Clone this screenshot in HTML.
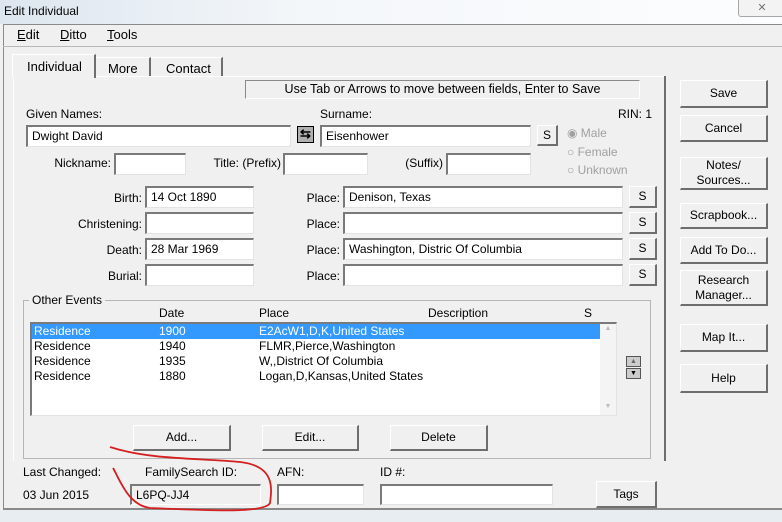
<!DOCTYPE html>
<html><head><style>
*{margin:0;padding:0;box-sizing:border-box}
body{width:782px;height:522px;overflow:hidden;background:#f0f0f0;font-family:"Liberation Sans",Arial,sans-serif;font-size:12px;color:#000;position:relative}
.a{position:absolute;white-space:nowrap}
.in{position:absolute;background:#fff;border-top:2px solid #7a7a7a;border-left:2px solid #7a7a7a;border-bottom:1px solid #e3e3e3;border-right:1px solid #e3e3e3;padding:2px 0 0 4px;height:22px;line-height:15px}
.bt{position:absolute;background:#f0f0f0;border-top:1px solid #fff;border-left:1px solid #fff;border-right:2px solid #6e6e6e;border-bottom:2px solid #6e6e6e;text-align:center;display:flex;align-items:center;justify-content:center;line-height:15px}
.r{text-align:right}
.g{color:#a0a0a0}
</style></head><body>
<div class="a" style="left:0;top:0;width:782px;height:24px;background:linear-gradient(90deg,#dde6ef,#f4f7fa 40%,#fcfdfe)"></div>
<div class="a" style="left:4px;top:4px;font-size:12px">Edit Individual</div>
<div class="a" style="left:738px;top:-4px;width:48px;height:21px;border:1px solid #a6a6a6;border-radius:3px;background:#f3f3f3;text-align:center;color:#777;font-size:11px;line-height:22px">✕</div>
<div class="a" style="left:3px;top:24px;width:779px;height:1px;background:#8a8a8a"></div>
<div class="a" style="left:3px;top:24px;width:1px;height:486px;background:#8a8a8a"></div>
<div class="a" style="left:3px;top:46px;width:779px;height:1px;background:#b8b8b8"></div>
<div class="a" style="left:17px;top:27px;font-size:13px"><u>E</u>dit</div>
<div class="a" style="left:60px;top:27px;font-size:13px"><u>D</u>itto</div>
<div class="a" style="left:107px;top:27px;font-size:13px"><u>T</u>ools</div>
<div class="a" style="left:13px;top:76px;width:653px;height:1px;background:#fff"></div>
<div class="a" style="left:13px;top:76px;width:1px;height:385px;background:#fff"></div>
<div class="a" style="left:664px;top:76px;width:2px;height:385px;background:#6e6e6e"></div>
<div class="a" style="left:12px;top:54px;width:84px;height:24px;background:#f0f0f0;border-top:1px solid #fff;border-left:1px solid #fff;border-right:2px solid #6e6e6e;padding:4px 0 0 14px;font-size:13px">Individual</div>
<div class="a" style="left:96px;top:57px;width:55px;height:19px;border-top:1px solid #fff;border-right:2px solid #6e6e6e;padding:3px 0 0 12px;font-size:13px">More</div>
<div class="a" style="left:151px;top:57px;width:72px;height:19px;border-top:1px solid #fff;border-right:2px solid #6e6e6e;padding:3px 0 0 15px;font-size:13px">Contact</div>
<div class="a" style="left:245px;top:80px;width:395px;height:19px;border-top:1px solid #8a8a8a;border-left:1px solid #8a8a8a;border-bottom:1px solid #fff;border-right:1px solid #fff;text-align:center;line-height:16px;font-size:12.5px">Use Tab or Arrows to move between fields, Enter to Save</div>
<div class="a" style="left:26px;top:107px">Given Names:</div>
<div class="a" style="left:320px;top:107px">Surname:</div>
<div class="a" style="left:618px;top:107px">RIN: 1</div>
<div class="in" style="left:26px;top:125px;width:265px">Dwight David</div>
<div class="a" style="left:297px;top:126px;width:17px;height:17px;border:1px solid #000;background:#b0b0b0;text-align:center;font-size:13px;line-height:13px;font-weight:bold">⇆</div>
<div class="in" style="left:320px;top:125px;width:211px">Eisenhower</div>
<div class="bt" style="left:537px;top:125px;width:21px;height:21px">S</div>
<div class="a g" style="left:567px;top:126px">◉ Male</div>
<div class="a g" style="left:567px;top:145px">○ Female</div>
<div class="a g" style="left:567px;top:163px">○ Unknown</div>
<div class="a r" style="left:30px;width:81px;top:156px">Nickname:</div>
<div class="in" style="left:114px;top:153px;width:72px"></div>
<div class="a r" style="left:190px;width:91px;top:156px">Title: (Prefix)</div>
<div class="in" style="left:283px;top:153px;width:85px"></div>
<div class="a r" style="left:380px;width:63px;top:156px">(Suffix)</div>
<div class="in" style="left:446px;top:153px;width:85px"></div>
<div class="a r" style="left:40px;width:102px;top:191px">Birth:</div>
<div class="in" style="left:145px;top:186px;width:109px">14 Oct 1890</div>
<div class="a r" style="left:40px;width:102px;top:217px">Christening:</div>
<div class="in" style="left:145px;top:212px;width:109px"></div>
<div class="a r" style="left:40px;width:102px;top:243px">Death:</div>
<div class="in" style="left:145px;top:238px;width:109px">28 Mar 1969</div>
<div class="a r" style="left:40px;width:102px;top:269px">Burial:</div>
<div class="in" style="left:145px;top:264px;width:109px"></div>
<div class="a r" style="left:280px;width:60px;top:191px">Place:</div>
<div class="in" style="left:343px;top:186px;width:280px">Denison, Texas</div>
<div class="a r" style="left:280px;width:60px;top:217px">Place:</div>
<div class="in" style="left:343px;top:212px;width:280px"></div>
<div class="a r" style="left:280px;width:60px;top:243px">Place:</div>
<div class="in" style="left:343px;top:238px;width:280px">Washington, Distric Of Columbia</div>
<div class="a r" style="left:280px;width:60px;top:269px">Place:</div>
<div class="in" style="left:343px;top:264px;width:280px"></div>
<div class="bt" style="left:629px;top:186px;width:28px;height:22px">S</div>
<div class="bt" style="left:629px;top:212px;width:28px;height:22px">S</div>
<div class="bt" style="left:629px;top:238px;width:28px;height:22px">S</div>
<div class="bt" style="left:629px;top:264px;width:28px;height:22px">S</div>
<div class="a" style="left:23px;top:300px;width:628px;height:159px;border:1px solid #b5b5b5"></div>
<div class="a" style="left:29px;top:293px;background:#f0f0f0;padding:0 3px">Other Events</div>
<div class="a" style="left:159px;top:306px">Date</div>
<div class="a" style="left:259px;top:306px">Place</div>
<div class="a" style="left:428px;top:306px">Description</div>
<div class="a" style="left:584px;top:306px">S</div>
<div class="a" style="left:30px;top:322px;width:587px;height:94px;background:#fff;border-top:2px solid #7a7a7a;border-left:2px solid #7a7a7a;border-right:1px solid #e3e3e3;border-bottom:1px solid #e3e3e3"></div>
<div class="a" style="left:32px;top:324px;width:568px;height:15px;background:#3399ff"></div>
<div class="a" style="left:600px;top:324px;width:16px;height:91px;background:#f4f4f4;color:#bbb;font-size:7px;text-align:center;line-height:10px">▲</div>
<div class="a" style="left:600px;top:403px;width:16px;color:#bbb;font-size:7px;text-align:center">▼</div>
<div class="a" style="left:34px;top:324px;color:#fff;line-height:15px">Residence</div>
<div class="a" style="left:34px;top:339px;line-height:15px">Residence<br>Residence<br>Residence</div>
<div class="a" style="left:159px;top:324px;color:#fff;line-height:15px">1900</div>
<div class="a" style="left:159px;top:339px;line-height:15px">1940<br>1935<br>1880</div>
<div class="a" style="left:259px;top:324px;color:#fff;line-height:15px">E2AcW1,D,K,United States</div>
<div class="a" style="left:259px;top:339px;line-height:15px">FLMR,Pierce,Washington<br>W,,District Of Columbia<br>Logan,D,Kansas,United States</div>
<div class="a" style="left:626px;top:356px;width:15px;height:11px;border:1px solid #555;background:#ccc;font-size:7px;text-align:center;line-height:9px;color:#666">▲</div>
<div class="a" style="left:626px;top:368px;width:15px;height:11px;border:1px solid #555;background:#ccc;font-size:7px;text-align:center;line-height:9px">▼</div>
<div class="bt" style="left:133px;top:425px;width:98px;height:26px">Add...</div>
<div class="bt" style="left:262px;top:425px;width:97px;height:26px">Edit...</div>
<div class="bt" style="left:390px;top:425px;width:98px;height:26px">Delete</div>
<div class="a" style="left:23px;top:465px">Last Changed:</div>
<div class="a" style="left:23px;top:488px">03 Jun 2015</div>
<div class="a" style="left:145px;top:465px">FamilySearch ID:</div>
<div class="a" style="left:130px;top:484px;width:131px;height:21px;border-top:2px solid #7a7a7a;border-left:2px solid #7a7a7a;border-bottom:1px solid #fff;border-right:1px solid #fff;padding:2px 0 0 4px">L6PQ-JJ4</div>
<div class="a" style="left:277px;top:465px">AFN:</div>
<div class="in" style="left:277px;top:484px;width:87px;height:21px"></div>
<div class="a" style="left:380px;top:465px">ID #:</div>
<div class="in" style="left:380px;top:484px;width:173px;height:21px"></div>
<div class="bt" style="left:596px;top:481px;width:61px;height:27px">Tags</div>
<div class="a" style="left:3px;top:508px;width:779px;height:2px;background:#8a8a8a"></div>
<div class="a" style="left:0;top:510px;width:782px;height:12px;background:#e8edf2"></div>
<div class="bt" style="left:680px;top:80px;width:88px;height:28px">Save</div>
<div class="bt" style="left:680px;top:115px;width:88px;height:27px">Cancel</div>
<div class="bt" style="left:680px;top:157px;width:88px;height:33px">Notes/<br>Sources...</div>
<div class="bt" style="left:680px;top:203px;width:88px;height:26px">Scrapbook...</div>
<div class="bt" style="left:680px;top:237px;width:88px;height:27px">Add To Do...</div>
<div class="bt" style="left:680px;top:270px;width:88px;height:36px">Research<br>Manager...</div>
<div class="bt" style="left:680px;top:324px;width:88px;height:28px">Map It...</div>
<div class="bt" style="left:680px;top:364px;width:88px;height:29px">Help</div>
<svg class="a" style="left:0;top:0" width="782" height="522"><path d="M110,447 C150,460 200,458 240,462 C275,466 272,488 270,503 C265,514 200,510 150,508 C128,505 120,480 113,468" fill="none" stroke="#d42020" stroke-width="1.8"/></svg>
</body></html>
